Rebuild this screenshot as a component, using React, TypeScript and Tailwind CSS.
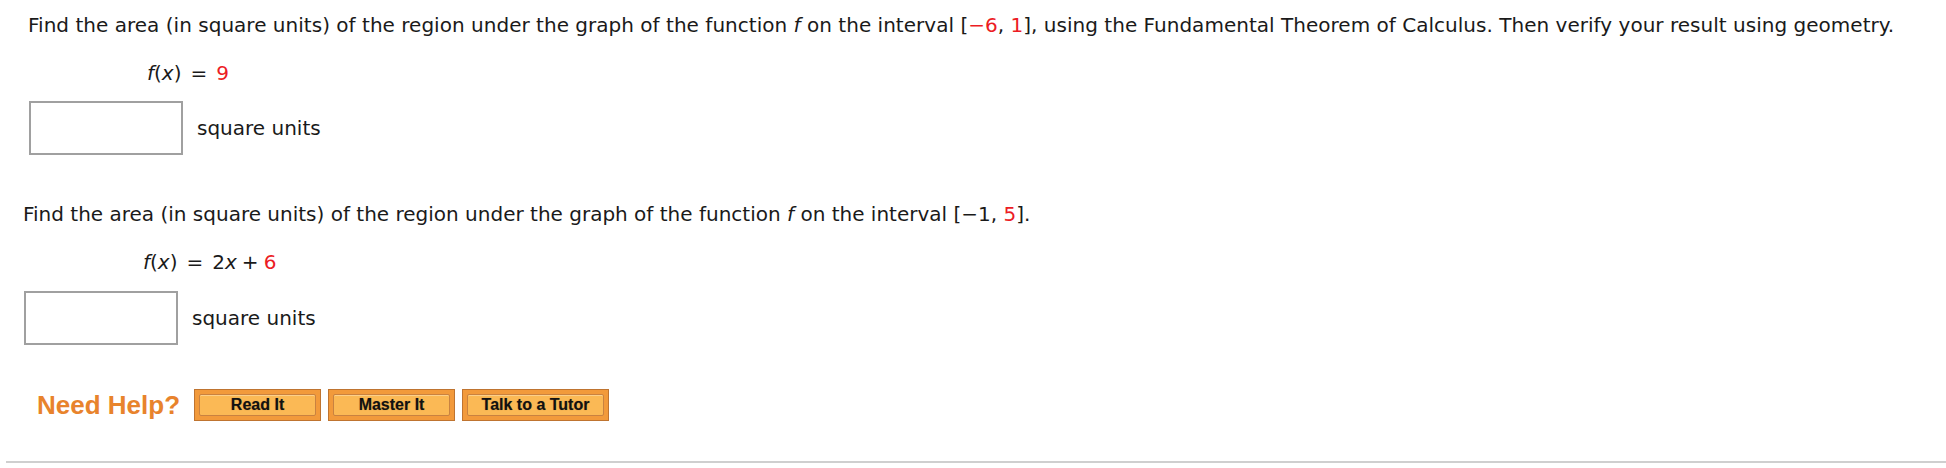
import React from "react";

const RED = "text-[#ec1c24]";

function HelpButton({ label, width }: { label: string; width: string }) {
  return (
    <div
      className={`${width} h-[32px] border border-[#bf7430] bg-[#f29a3b] p-[4px] flex`}
    >
      <div className="flex-1 rounded-[2px] border border-[#c98240] bg-[#fbb955] flex items-center justify-center shadow-[inset_0_1px_0_#fdd08a]">
        <span className="font-['Liberation_Sans',Arial,sans-serif] font-bold text-[16px] leading-none text-[#111] [text-shadow:0_0_1px_rgba(0,0,0,0.35)]">
          {label}
        </span>
      </div>
    </div>
  );
}

function AnswerRow({ left, labelGap }: { left: string; labelGap: string }) {
  return (
    <div className={`h-[54px] flex items-center ${left}`}>
      <div className="w-[154px] h-[54px] border-2 border-[#a0a0a0] bg-white" />
      <span className={labelGap}>square units</span>
    </div>
  );
}

export default function App() {
  return (
    <div className="w-[1946px] h-[468px] bg-white text-[#1a1a1a] font-['DejaVu_Sans',Verdana,sans-serif] text-[20px] leading-none overflow-hidden">
      {/* Question 1 */}
      <div className="h-[50px] flex items-center pl-[28px] whitespace-nowrap tracking-[0.02px]">
        <span>
          Find the area (in square units) of the region under the graph of the function <i>f</i> on the interval [
          <span className={RED}>−6</span>, <span className={RED}>1</span>], using the Fundamental Theorem of Calculus. Then verify your result using geometry.
        </span>
      </div>
      <div className="h-[46px] flex items-center pl-[147px] whitespace-nowrap">
        <span>
          <i>f</i>(<i>x</i>)<span className="mx-[9px]">=</span>
          <span className={RED}>9</span>
        </span>
      </div>
      <div className="mt-[5px]">
        <AnswerRow left="pl-[29px]" labelGap="ml-[14px]" />
      </div>

      {/* Question 2 */}
      <div className="mt-[39px] h-[40px] flex items-center pl-[23px] whitespace-nowrap">
        <span>
          Find the area (in square units) of the region under the graph of the function <i>f</i> on the interval [−1, <span className={RED}>5</span>].
        </span>
      </div>
      <div className="h-[56px] flex items-center pl-[143px] whitespace-nowrap">
        <span>
          <i>f</i>(<i>x</i>)<span className="mx-[9px]">=</span>2<i>x</i>
          <span className="mx-[5px]">+</span>
          <span className={RED}>6</span>
        </span>
      </div>
      <div className="mt-[1px]">
        <AnswerRow left="pl-[24px]" labelGap="ml-[14px]" />
      </div>

      {/* Need help */}
      <div className="mt-[44px] h-[32px] flex items-center pl-[37px]">
        <span className="font-['Liberation_Sans',Arial,sans-serif] font-bold text-[26px] text-[#e8832c] mr-[14px]">
          Need Help?
        </span>
        <div className="flex gap-[7px]">
          <HelpButton label="Read It" width="w-[127px]" />
          <HelpButton label="Master It" width="w-[127px]" />
          <HelpButton label="Talk to a Tutor" width="w-[147px]" />
        </div>
      </div>

      <div className="mt-[40px] ml-[6px] h-[2px] bg-[#cfcfcf]" />
    </div>
  );
}
